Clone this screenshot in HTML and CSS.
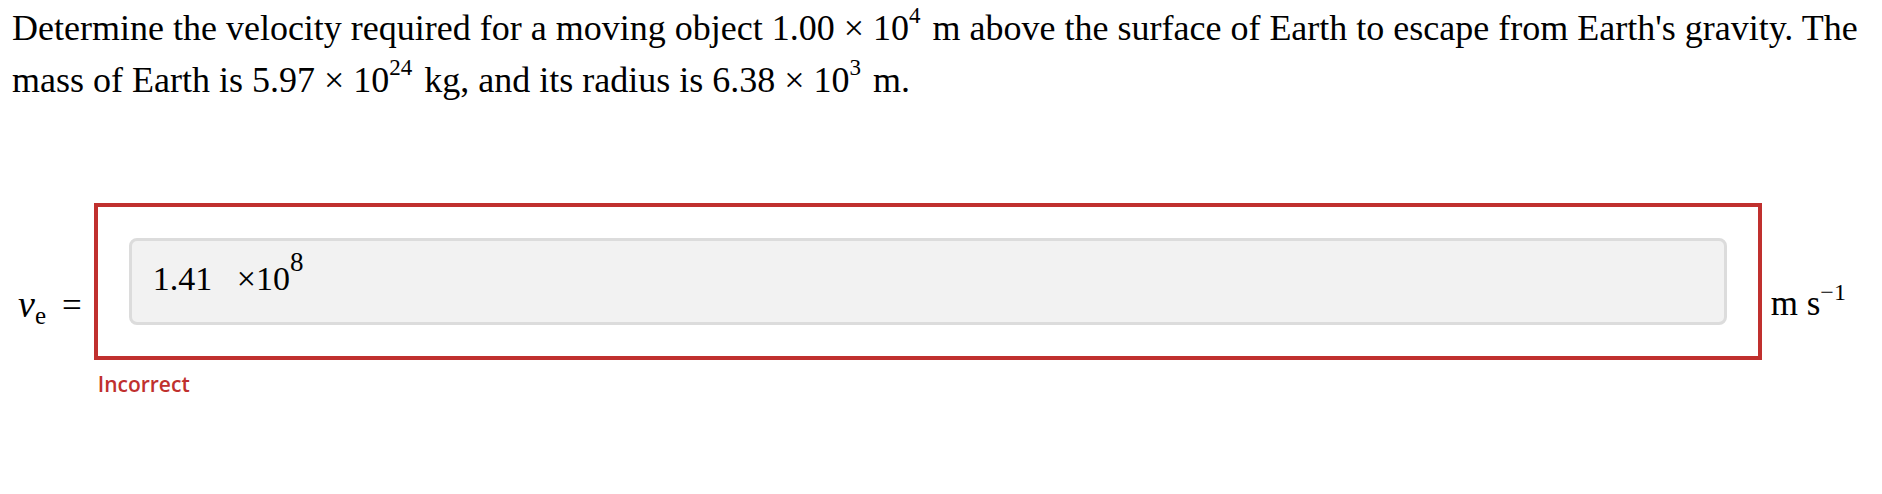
FILE: index.html
```html
<!DOCTYPE html>
<html lang="en">
<head>
    <meta charset="UTF-8">
    <meta name="viewport" content="width=device-width, initial-scale=1.0">
    <title>Escape Velocity</title>
    <link rel="stylesheet" href="styles.css">
</head>
<body>

<div class="question">
    Determine the velocity required for a moving object 1.00 &times; 10<sup>4</sup> m above the surface of Earth to escape from Earth's gravity. The mass of Earth is 5.97 &times; 10<sup>24</sup> kg, and its radius is 6.38 &times; 10<sup>3</sup> m.
</div>

<div class="answer-row">
    <div class="label"><i>v</i><sub>e</sub><span class="eq">=</span></div>
    <div class="answer-wrap">
        <div class="answer-box incorrect">
            <div class="answer-input">
                <span class="num">1.41</span>
                <span class="times">&times;10<sup>8</sup></span>
            </div>
        </div>
        <div class="feedback">Incorrect</div>
    </div>
    <div class="units">m s<sup>&minus;1</sup></div>
</div>

</body>
</html>
```

FILE: styles.css
```css
body {
    margin: 0;
    background: #fff;
    color: #000;
    font-family: "Liberation Serif", "Times New Roman", serif;
}
.question {
    padding: 2px 12px 0 12px;
    font-size: 36px;
    line-height: 52px;
}
.question sup {
    font-size: 23px;
    line-height: 0;
    vertical-align: 17px;
    margin-right: 3px;
}
.answer-row {
    display: flex;
    align-items: flex-start;
    margin-top: 97px;
    padding-left: 18px;
}
.label, .units {
    font-size: 35px;
    line-height: 35px;
    padding-top: 84px;
    white-space: nowrap;
}
.label i {
    font-size: 38px;
}
.label sub {
    font-size: 25px;
    line-height: 0;
    vertical-align: -7px;
}
.eq {
    margin-left: 16px;
    margin-right: 12px;
}
.units {
    margin-left: 9px;
    padding-top: 83px;
}
.units sup {
    font-size: 24px;
    line-height: 0;
    vertical-align: 15px;
}
.answer-box {
    box-sizing: border-box;
    width: 1668px;
    padding: 31px;
    border: 4px solid #c0302e;
}
.answer-input {
    box-sizing: border-box;
    height: 87px;
    padding: 19px 21px 0 21px;
    border: 3px solid #dcdcdc;
    border-radius: 8px;
    background: #f2f2f2;
    font-size: 34px;
    white-space: nowrap;
}
.times {
    margin-left: 16px;
}
.times sup {
    font-size: 27px;
    line-height: 0;
    vertical-align: 19px;
}
.feedback {
    margin: 10px 0 0 4px;
    color: #c0302e;
    font-family: "Open Sans", sans-serif;
    font-weight: 600;
    font-size: 21px;
}
```
